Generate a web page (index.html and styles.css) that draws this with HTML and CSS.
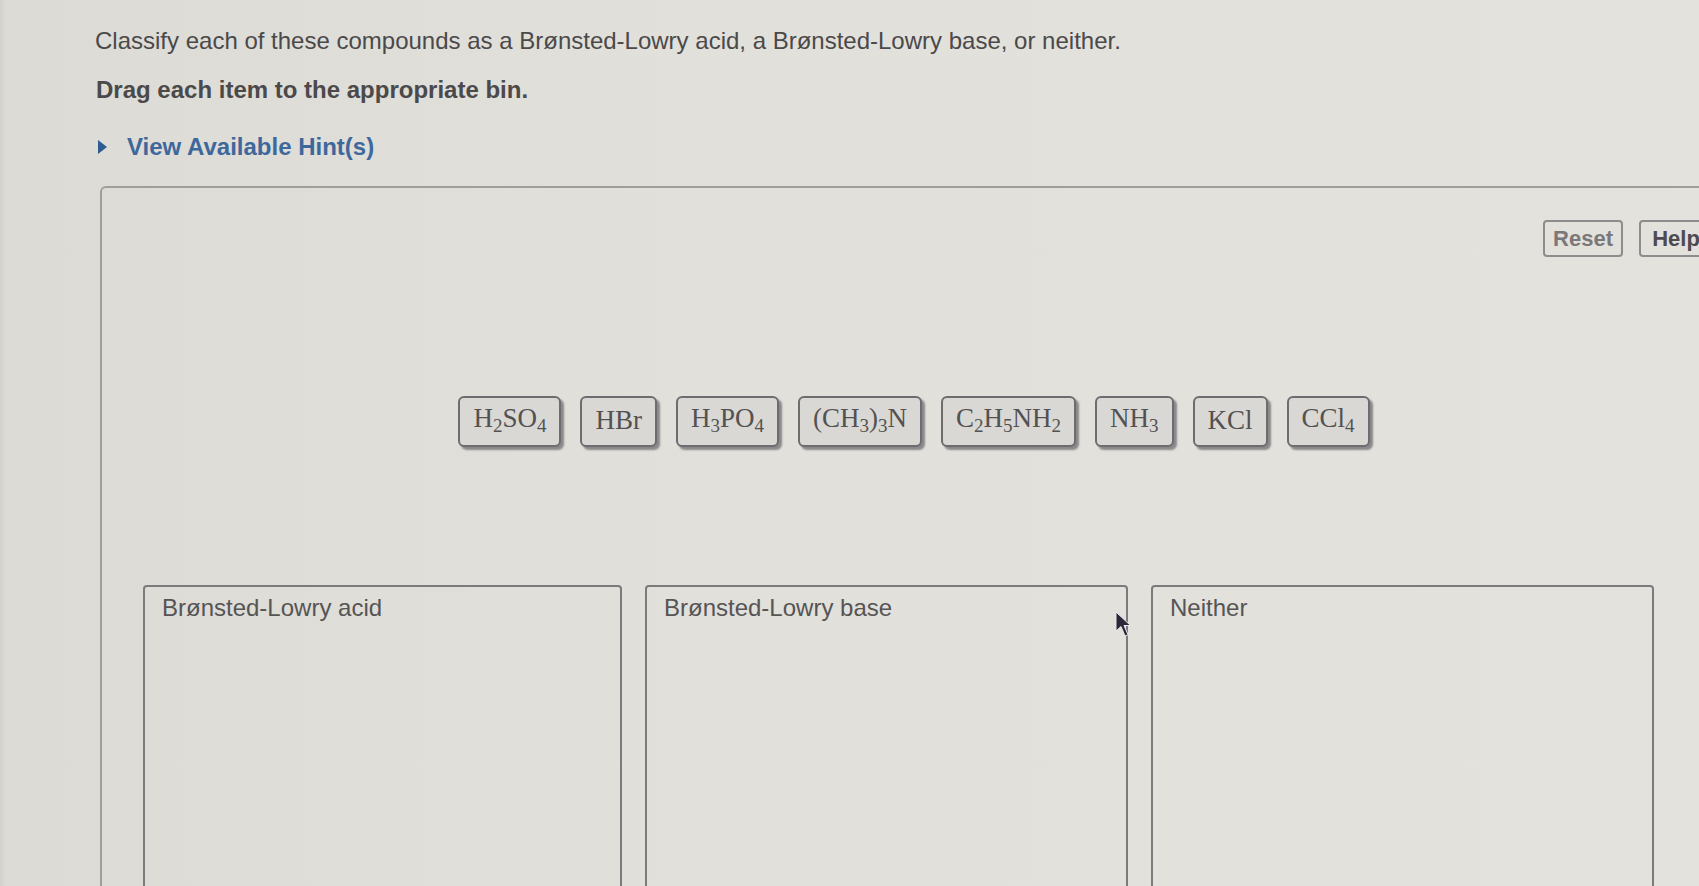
FILE: index.html
```html
<!DOCTYPE html>
<html lang="en">
<head>
<meta charset="utf-8">
<title>Classify compounds</title>
<link rel="stylesheet" href="styles.css">
</head>
<body>
<div class="page">
  <p class="prompt">Classify each of these compounds as a Brønsted-Lowry acid, a Brønsted-Lowry base, or neither.</p>
  <p class="instruction">Drag each item to the appropriate bin.</p>
  <div class="hint">
    <svg class="hint-arrow" width="11" height="16" viewBox="0 0 11 16"><path d="M1 1 L10 8 L1 15 Z" fill="#2f5b93"/></svg>
    <span class="hint-text">View Available Hint(s)</span>
  </div>
  <div class="workspace">
    <div class="toolbar">
      <button class="tool-btn reset">Reset</button>
      <button class="tool-btn help">Help</button>
    </div>
    <div class="chips">
      <div class="chip"><span class="formula">H<sub>2</sub>SO<sub>4</sub></span></div>
      <div class="chip"><span class="formula">HBr</span></div>
      <div class="chip"><span class="formula">H<sub>3</sub>PO<sub>4</sub></span></div>
      <div class="chip"><span class="formula">(CH<sub>3</sub>)<sub>3</sub>N</span></div>
      <div class="chip"><span class="formula">C<sub>2</sub>H<sub>5</sub>NH<sub>2</sub></span></div>
      <div class="chip"><span class="formula">NH<sub>3</sub></span></div>
      <div class="chip"><span class="formula">KCl</span></div>
      <div class="chip"><span class="formula">CCl<sub>4</sub></span></div>
    </div>
    <div class="bins">
      <div class="bin"><div class="bin-label">Brønsted-Lowry acid</div></div>
      <div class="bin"><div class="bin-label">Brønsted-Lowry base</div></div>
      <div class="bin"><div class="bin-label">Neither</div></div>
    </div>
    <svg class="cursor" width="18" height="28" viewBox="0 0 18 28"><path d="M1 1 L1 20 L6 15.5 L10 25 L13 23.8 L9 14.5 L15.5 14.5 Z" fill="#2a2838" stroke="#e8e8ee" stroke-width="1"/></svg>
  </div>
</div>
</body>
</html>
```
FILE: styles.css
```css
html, body {
  margin: 0;
  padding: 0;
}
body {
  width: 1699px;
  height: 886px;
  overflow: hidden;
  background: linear-gradient(90deg, #d2d1cc 0px, #dcdbd6 6px, #e1e0db 40%, #e3e2dd 100%);
  font-family: "Liberation Sans", Arial, sans-serif;
  color: #4b4949;
}
.page {
  padding: 26px 0 0 95px;
}
.prompt {
  margin: 0;
  font-size: 24px;
  line-height: 30px;
}
.instruction {
  margin: 19px 0 0 1px;
  font-size: 24px;
  font-weight: bold;
  line-height: 30px;
}
.hint {
  margin: 27px 0 0 2px;
  display: flex;
  align-items: center;
  gap: 19px;
  height: 30px;
}
.hint-arrow {
  display: block;
}
.hint-text {
  font-size: 24px;
  font-weight: bold;
  color: #3e689c;
}
.workspace {
  position: relative;
  margin: 24px 0 0 5px;
  width: 1630px;
  height: 760px;
  border: 2px solid #a09e9c;
  border-radius: 6px 6px 0 0;
  box-sizing: border-box;
}
.toolbar {
  display: flex;
  justify-content: flex-end;
  gap: 16px;
  padding: 32px 15px 0 0;
}
.tool-btn {
  height: 37px;
  padding: 0 8px;
  border: 2px solid #8e8c8c;
  border-radius: 4px;
  background: #e2e1dc;
  font-family: "Liberation Sans", Arial, sans-serif;
  font-size: 22px;
  font-weight: bold;
}
.reset {
  width: 80px;
  color: #7a7878;
}
.help {
  width: 74px;
  color: #4e4a50;
}
.chips {
  display: flex;
  justify-content: center;
  gap: 19px;
  margin: 139px 0 0 0;
  padding-right: 2px;
}
.chip {
  height: 44px;
  padding: 0 13px 3px;
  display: flex;
  align-items: center;
  border: 2px solid #6f6c70;
  border-radius: 6px;
  background: #d9d8d5;
  box-shadow: 3px 3px 2px #8a888a;
  font-family: "Liberation Serif", "Times New Roman", serif;
  font-size: 27px;
  color: #535151;
}
.formula {
  line-height: 1;
}
.formula sub {
  font-size: 19px;
  vertical-align: -5px;
  line-height: 1;
}
.bins {
  display: grid;
  grid-template-columns: 479px 483px 503px;
  column-gap: 23px;
  margin: 138px 0 0 41px;
}
.bin {
  height: 320px;
  border: 2px solid #7c7a7c;
  border-radius: 4px 4px 0 0;
  padding: 6px 0 0 17px;
  box-sizing: border-box;
}
.bin-label {
  font-size: 24px;
  line-height: 30px;
  color: #565454;
}
.cursor {
  position: absolute;
  left: 1013px;
  top: 423px;
}
```
